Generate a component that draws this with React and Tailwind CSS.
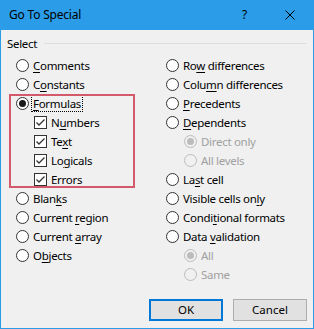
import React from 'react';

const FONT = { fontFamily: '"Noto Sans", "Segoe UI", sans-serif' };

// label with one underlined access key
const Label = ({ text, k, disabled }) => {
    if (k == null || disabled) return <span>{text}</span>;
    return (
        <span>
            {text.slice(0, k)}
            <span className="underline underline-offset-[2px] decoration-1">{text[k]}</span>
            {text.slice(k + 1)}
        </span>
    );
};

const Radio = ({ checked, disabled }) => (
    <span
        className={`w-[13px] h-[13px] rounded-full border flex items-center justify-center shrink-0 ${
            disabled ? 'border-[#bcbcbc] bg-[#f0f0f0]' : 'border-[#333333] bg-white'
        }`}
    >
        {checked && (
            <span className={`w-[7px] h-[7px] rounded-full ${disabled ? 'bg-[#bcbcbc]' : 'bg-[#1a1a1a]'}`} />
        )}
    </span>
);

const Check = () => (
    <span className="w-[13px] h-[13px] border border-[#333333] bg-white flex items-center justify-center shrink-0">
        <svg width="11" height="11" viewBox="0 0 11 11">
            <path d="M1.5 5.5 L4 8 L9.5 2.5" fill="none" stroke="#333333" strokeWidth="1.3" />
        </svg>
    </span>
);

const Row = ({ kind = 'radio', text, k, checked, disabled, indent, focus }) => (
    <div className={`h-[19px] flex items-center gap-[4px] ${indent ? 'pl-[18px]' : ''}`}>
        {kind === 'radio' ? <Radio checked={checked} disabled={disabled} /> : <Check />}
        <span
            className={`text-[11.5px] tracking-[-0.3px] leading-none whitespace-nowrap ${disabled ? 'text-[#a0a0a0]' : 'text-black'} ${
                focus ? 'outline outline-1 outline-dotted outline-black px-[1px] -ml-[1px] py-[2px]' : ''
            }`}
        >
            <Label text={text} k={k} disabled={disabled} />
        </span>
    </div>
);

export default function App() {
    return (
        <div className="w-[314px] h-[329px] bg-[#f0f0f0] flex flex-col border-x border-b border-[#2b9de8]" style={FONT}>
            {/* title bar */}
            <div className="h-[30px] -mx-px bg-[#2b9de8] flex items-center shrink-0">
                <span className="pl-[9px] text-[12px] tracking-[-0.2px] text-black flex-1">Go To Special</span>
                <span className="text-[12px] text-black w-[12px] mr-[31px]">?</span>
                <svg width="10" height="10" viewBox="0 0 10 10" className="mr-[19px]">
                    <path d="M0.5 0.5 L9.5 9.5 M9.5 0.5 L0.5 9.5" stroke="#000" strokeWidth="1" />
                </svg>
            </div>

            <div className="pt-[6px] flex flex-col flex-1">
                <div className="h-[16px] flex items-center pl-[6px] pr-[7px] gap-[7px]">
                    <span className="text-[11.5px] tracking-[-0.3px] text-black leading-none">Select</span>
                    <span className="flex-1 h-px bg-[#dcdcdc] mt-[-1px]" />
                </div>

                <div className="mt-[4px] grid grid-cols-[150px_1fr] pl-[15px]">
                    <div className="flex flex-col">
                        <Row text="Comments" k={0} />
                        <Row text="Constants" k={1} />
                        <div className="relative">
                            <div className="absolute left-[-7px] top-0 w-[126px] h-[94px] border-2 border-[#d35a6b] pointer-events-none" />
                            <Row text="Formulas" k={0} checked focus />
                            <div className="pl-[18px]">
                                <Row kind="check" text="Numbers" k={1} />
                                <Row kind="check" text="Text" k={2} />
                                <Row kind="check" text="Logicals" k={2} />
                                <Row kind="check" text="Errors" k={0} />
                            </div>
                        </div>
                        <Row text="Blanks" k={4} />
                        <Row text="Current region" k={8} />
                        <Row text="Current array" k={8} />
                        <Row text="Objects" k={1} />
                    </div>
                    <div className="flex flex-col">
                        <Row text="Row differences" k={2} />
                        <Row text="Column differences" k={4} />
                        <Row text="Precedents" k={0} />
                        <Row text="Dependents" k={0} />
                        <Row text="Direct only" checked disabled indent />
                        <Row text="All levels" disabled indent />
                        <Row text="Last cell" k={2} />
                        <Row text="Visible cells only" k={16} />
                        <Row text="Conditional formats" k={5} />
                        <Row text="Data validation" k={5} />
                        <Row text="All" checked disabled indent />
                        <Row text="Same" disabled indent />
                    </div>
                </div>

                <div className="mt-[15px] flex justify-end gap-[10px] pr-[6px]">
                    <button className="w-[74px] h-[22px] bg-[#e1e1e1] border-2 border-[#0078d7] text-[11.5px] text-black">
                        OK
                    </button>
                    <button className="w-[74px] h-[22px] bg-[#e1e1e1] border border-[#adadad] text-[11.5px] text-black">
                        Cancel
                    </button>
                </div>
            </div>
        </div>
    );
}
